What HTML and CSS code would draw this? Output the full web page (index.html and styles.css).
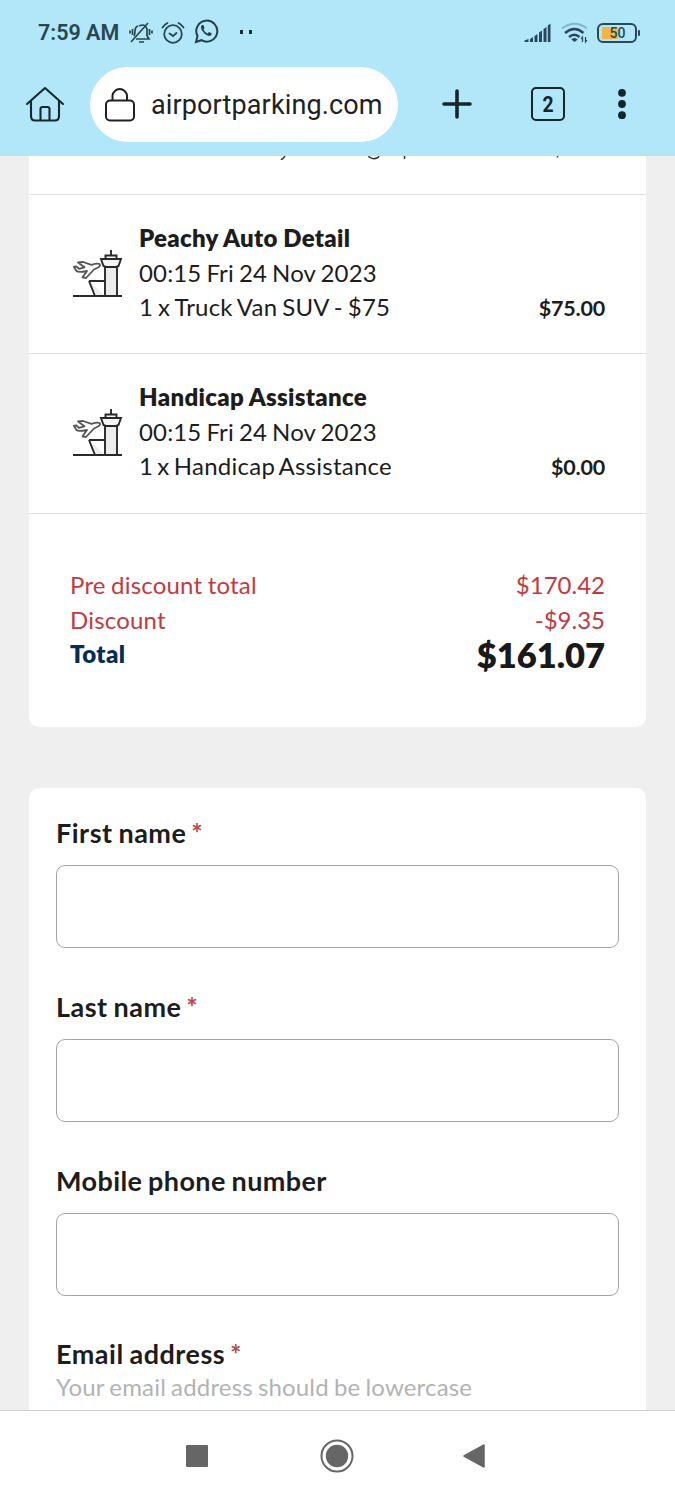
FILE: index.html
```html
<!DOCTYPE html>
<html lang="en">
<head>
<meta charset="utf-8">
<title>Airport parking booking</title>
<link rel="stylesheet" href="styles.css">
</head>
<body>
<svg class="defs" width="0" height="0">
  <symbol id="tower" viewBox="0 0 50 48">
    <g fill="none" stroke="#292929" stroke-width="1.9">
      <path d="M16 31H32M16 31L22 46H32M32 17V46H44V17" fill="#ececed"/>
      <path d="M28 9H48L45.500 16L43 17H33L30.500 16ZM32.500 9V5.500H43.500V9M38 5.500V0" fill="#f6f6f6"/>
      <path d="M0 46H49" stroke-width="2"/>
    </g>
    <path d="M26.500 14C24.500 13 21.500 13.800 18.500 14.800L10 12L5 12.500L11.500 17.300L6 18.800L3 16.300L.8 16.800L3.500 21C5 22.500 8 22.200 14 21L9.500 27.300L13 28L21 19.500L24.500 17.800C27 16.500 27.500 15 26.500 14Z" fill="none" stroke="#555" stroke-width="1.800" stroke-linejoin="round"/>
  </symbol>
</svg>
<header class="browser">
  <div class="status">
    <span class="clock">7:59 AM</span>
    <svg class="bell" width="24" height="24" viewBox="0 0 24 24" fill="none" stroke="#294650" stroke-width="1.700">
      <path d="M10 5Q16 2 18 8V14.500L20 18H7M5 15Q6 13 6 10Q6 6 9 5M2 21L19 2"/>
      <path d="M3.500 8V14M1 9.500V12.500M20.500 8V14M23 9.500V12.500M10 21H15"/>
    </svg>
    <svg class="alarm" width="24" height="24" viewBox="0 0 24 24" fill="none" stroke="#294650" stroke-width="1.800" stroke-linecap="round">
      <circle cx="12" cy="13" r="8.800"/><path d="M1.500 6.500Q3.500 3.500 6.500 2M22.500 6.500Q20.500 3.500 17.500 2M8.500 12.500L12 15L15.500 12"/>
    </svg>
    <svg class="whatsapp" width="26" height="26" viewBox="0 0 26 26" fill="none" stroke="#243f49" stroke-width="2">
      <path d="M3 24L4.500 18A10.500 10.500 0 1 1 8.500 22.200Z"/>
      <path d="M9 7Q7 9 9 12.500Q12 17 16 18Q18 18 19 15.500L16 14L14.500 15.500Q11.500 14 10.500 11.500L11.500 10L10.500 7Z" fill="#243f49" stroke="none"/>
    </svg>
    <svg class="more-status" width="18" height="8" viewBox="0 0 18 8" fill="#1c2d34"><path d="M1 2H4V6H1ZM10 2H13V6H10Z"/></svg>
    <svg class="signal" width="28" height="22" viewBox="0 0 28 22" fill="#29485c"><path d="M.5 20V18.500L4.500 17V20ZM6 17L9 15V20H6ZM10.500 14L13.500 12V20H10.500ZM15 10.500L18 8.500V20H15ZM19.500 7L22.500 5V20H19.500ZM23.800 3.500L26.500 1.500V20H23.800Z"/></svg>
    <svg class="wifi" width="28" height="22" viewBox="0 0 28 22" fill="none" stroke="#29485c" stroke-width="2.400">
      <path d="M1 6.500Q13.500-3 26 6.500" stroke="#84b5c8" stroke-width="2"/><path d="M4 11Q13.500 3 22.500 11M8 15Q13.500 10.500 18.500 15"/><path d="M13.500 19L11.500 17.500Q13.500 16 15.500 17.500Z" fill="#29485c" stroke-width="1.500"/>
      <path d="M21.500 20V15L20 17M24.500 15V20L26 18" stroke-width="1.200"/>
    </svg>
    <span class="battery"><span class="charge">50</span></span><span class="battery-tip"></span>
  </div>
  <nav class="toolbar">
    <svg class="home" width="40" height="38" viewBox="0 0 40 38" fill="none" stroke="#16292f" stroke-width="2.1" stroke-linecap="round" stroke-linejoin="round">
      <path d="M2 19L20 3L38 19M6 16V31Q6 35.500 10 35.500H30Q34 35.500 34 31V16M15.500 35V24Q15.500 22 17.500 22H22.500Q24.500 22 24.500 24V35"/>
    </svg>
    <div class="address">
      <svg width="32" height="38" viewBox="0 0 32 38" fill="none" stroke="#202124" stroke-width="2"><rect x="2" y="15.500" width="28" height="20" rx="4"/><path d="M8.500 15.500V10.500A7.300 7.300 0 0 1 23 10.500V15.500"/></svg>
      <span class="url">airportparking.com</span>
    </div>
    <svg class="plus" width="32" height="32" viewBox="0 0 32 32" stroke="#16242b" stroke-width="3.600" stroke-linecap="round"><path d="M16 3V29M3 16H29"/></svg>
    <span class="tabs"><span>2</span></span>
    <svg class="dots" width="10" height="32" viewBox="0 0 10 32" fill="#16242b"><circle cx="5" cy="4.800" r="3.900"/><circle cx="5" cy="16" r="3.900"/><circle cx="5" cy="27.200" r="3.900"/></svg>
  </nav>
</header>
<main class="page">
  <section class="card summary">
    <div class="previous">
      <svg width="617" height="5" viewBox="0 0 617 5" fill="none" stroke="#333" stroke-width="1.500"><path d="M256 0L254 2.500Q253 3.500 252 3M340 0V1Q344 4 349 1.500L350 0M375.500 0V3M528.500 0V1.500"/></svg>
    </div>
    <article class="item first">
      <svg class="tower" width="50" height="48"><use href="#tower"/></svg>
      <div class="detail"><h2>Peachy Auto Detail</h2><p class="date">00:15 Fri 24 Nov 2023</p><p class="vehicle">1 x Truck Van SUV - $75</p></div>
      <strong class="price">$75.00</strong>
    </article>
    <article class="item second">
      <svg class="tower" width="50" height="48"><use href="#tower"/></svg>
      <div class="detail"><h2>Handicap Assistance</h2><p class="date">00:15 Fri 24 Nov 2023</p><p class="service">1 x Handicap Assistance</p></div>
      <strong class="price">$0.00</strong>
    </article>
    <div class="totals">
      <div class="line"><span>Pre discount total</span><span>$170.42</span></div>
      <div class="line"><span>Discount</span><span>-$9.35</span></div>
      <div class="line total"><b>Total</b><strong>$161.07</strong></div>
    </div>
  </section>
  <form class="card form">
    <div class="field"><label for="first">First name <i>*</i></label><input id="first" type="text"></div>
    <div class="field"><label for="last">Last name <i>*</i></label><input id="last" type="text"></div>
    <div class="field"><label class="phone" for="phone">Mobile phone number</label><input id="phone" type="tel"></div>
    <div class="field email"><label>Email address <i>*</i></label><p class="hint">Your email address should be lowercase</p></div>
  </form>
</main>
<footer class="android">
  <svg width="24" height="24" viewBox="0 0 24 24"><rect x="1" y="1" width="22" height="22" rx="1" fill="#666"/></svg>
  <svg class="circle" width="34" height="34" viewBox="0 0 34 34"><circle cx="17" cy="17" r="15.500" fill="none" stroke="#666" stroke-width="2"/><circle cx="17" cy="17" r="11.200" fill="#666"/></svg>
  <svg width="22" height="26" viewBox="0 0 22 26"><path d="M1 13L21 2V24Z" fill="#666" stroke="#666" stroke-width="1.500" stroke-linejoin="round"/></svg>
</footer>
</body>
</html>
```
FILE: styles.css
```css
* { box-sizing: border-box; }
body { margin: 0; width: 675px; height: 1500px; overflow: hidden; display: flex; flex-direction: column; background: #efeff0; font-family: Lato, sans-serif; color: #1d1d1d; }
h2, p { margin: 0; }
svg { display: block; flex: none; }
.defs { position: absolute; }
.browser { height: 156px; flex: none; background: #b2e6f9; font-family: Roboto, sans-serif; }
.status { height: 60px; padding: 5px 35px 0 38px; display: flex; align-items: center; }
.clock { width: 81px; color: #294650; font-size: 21.5px; font-weight: 600; white-space: nowrap; }
.bell { margin-left: 10px; }
.alarm { margin-left: 8px; }
.whatsapp { margin-left: 8px; margin-top: -3px; }
.more-status { margin-left: 20px; margin-top: -2px; }
.signal { margin-left: auto; }
.wifi { margin-left: 9px; margin-top: 1px; }
.battery { width: 40px; height: 20px; margin-left: 8px; padding: 2px 2px 2px 3px; border: 2px solid #29485c; border-radius: 6px; }
.charge { display: block; height: 12px; background: linear-gradient(90deg, #f4b548 50%, transparent 50%); color: #29485c; font-size: 14px; line-height: 12px; text-align: center; font-weight: 500; }
.battery-tip { width: 2px; height: 6px; margin-left: 1px; border-radius: 1px; background: #29485c; }
.toolbar { height: 96px; display: flex; align-items: center; padding: 0 48px 8px 25px; }
.address { width: 308px; height: 75px; margin-left: 25px; padding-left: 14px; border-radius: 38px; background: #fff; display: flex; align-items: center; gap: 15px; font-size: 27px; letter-spacing: .13px; color: #202124; }
.url { padding-top: 2px; }
.plus { margin-left: 43px; }
.tabs { width: 34px; height: 34px; margin-left: 58px; border: 2px solid #16242b; border-radius: 5px; font-size: 22px; font-weight: 700; line-height: 32px; text-align: center; color: #16242b; }
.tabs span { display: block; transform: scaleX(.88); }
.dots { margin-left: auto; }
.page { height: 1254px; overflow: hidden; padding: 0 29px; }
.card { background: #fff; }
.summary { height: 571px; border-radius: 0 0 10px 10px; }
.previous { height: 38px; }
.item { border-top: 1px solid #dedee3; padding: 26px 41px 0 44px; display: flex; }
.first { height: 159px; }
.second { height: 160px; }
.tower { margin-top: 29px; }
.detail { margin-left: 16px; font-size: 24px; line-height: 34.5px; white-space: nowrap; }
.detail h2 { font-size: 24px; font-weight: 800; letter-spacing: .3px; word-spacing: -.3px; }
.date { letter-spacing: .15px; word-spacing: -1.3px; }
.vehicle { letter-spacing: .2px; word-spacing: -1.4px; }
.service { letter-spacing: .25px; word-spacing: -2.2px; }
.price { margin-left: auto; margin-top: 70px; line-height: 34.5px; font-size: 21.5px; font-weight: 700; letter-spacing: -.2px; }
.totals { border-top: 1px solid #dedee3; padding: 54px 41px 0; color: #c23a41; font-size: 24px; line-height: 34.5px; }
.line { display: flex; justify-content: space-between; }
.line span:first-child { letter-spacing: .2px; word-spacing: -1px; }
.total b { color: #052d58; line-height: 33px; font-weight: 800; letter-spacing: .4px; }
.total strong { color: #191919; font-size: 34.5px; line-height: 35px; font-weight: 800; }
.form { height: 700px; margin-top: 61px; padding: 27px 27px 0; border-radius: 10px 10px 0 0; }
.field { height: 174px; }
.field label { display: block; height: 50px; font-size: 27px; line-height: 36px; font-weight: 700; letter-spacing: .5px; word-spacing: -1.2px; }
.field .phone { letter-spacing: .4px; }
.field i { color: #b84b4b; font-style: normal; font-weight: 700; margin-left: -1px; }
.field input { display: block; width: 563px; height: 83px; border: 1px solid #a5a5a5; border-radius: 9px; background: #fff; padding: 0 18px; }
.email { margin-top: -1px; }
.hint { margin-top: -16px; color: #b3b3b3; font-size: 24px; line-height: 34px; letter-spacing: .17px; word-spacing: -1.2px; }
.android { height: 90px; border-top: 1px solid #cfcfcf; background: #fff; display: flex; align-items: center; padding: 0 190px 0 185px; justify-content: space-between; }
.circle { margin-left: 2px; }
```
